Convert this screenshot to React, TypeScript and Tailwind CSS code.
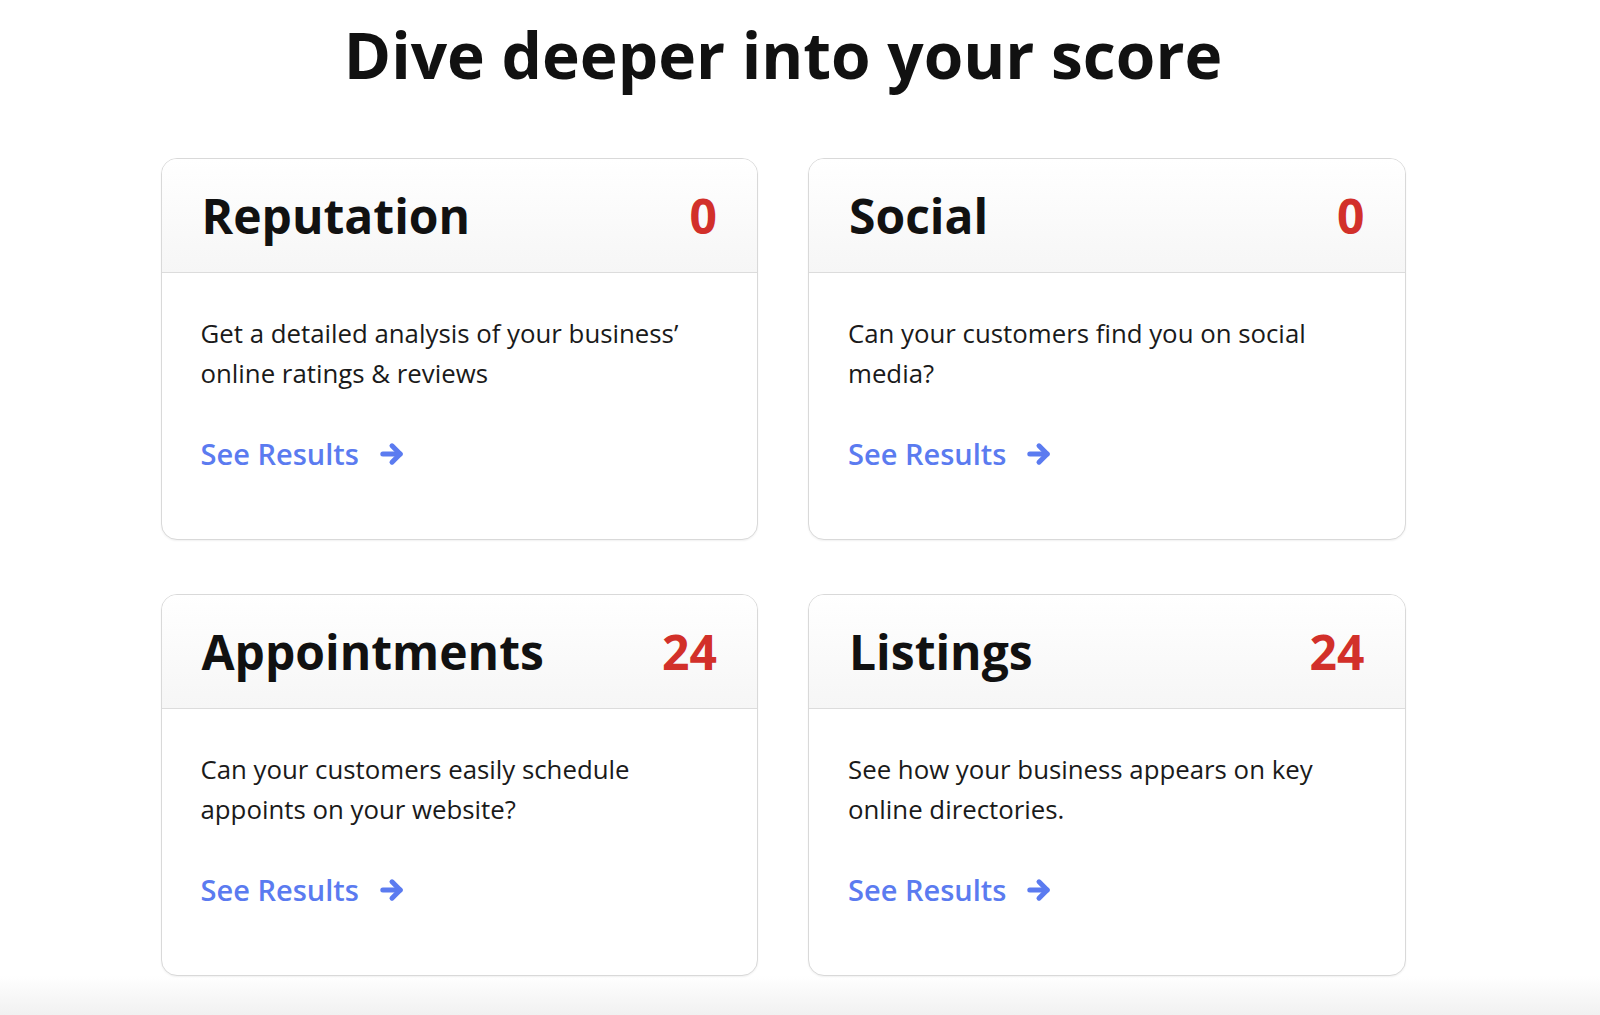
import React from "react";

type Card = { title: string; score: string; desc: string };

const cards: Card[] = [
  { title: "Reputation", score: "0", desc: "Get a detailed analysis of your business\u2019 online ratings & reviews" },
  { title: "Social", score: "0", desc: "Can your customers find you on social media?" },
  { title: "Appointments", score: "24", desc: "Can your customers easily schedule appoints on your website?" },
  { title: "Listings", score: "24", desc: "See how your business appears on key online directories." },
];

function Arrow() {
  return (
    <svg viewBox="0 0 24 24" className="h-[24px] w-[24px]" fill="none" stroke="currentColor" strokeWidth={5} strokeLinecap="round" strokeLinejoin="round">
      <path d="M2.8 12H20.2" />
      <path d="M12 3.8L20.2 12L12 20.2" />
    </svg>
  );
}

function ScoreCard({ c }: { c: Card }) {
  return (
    <div className="flex flex-col overflow-hidden rounded-2xl border border-[#d9d9d9] bg-white shadow-[0_1px_2px_rgba(0,0,0,0.06)]">
      <div className="flex h-[114px] items-center justify-between border-b border-[#dcdcdc] bg-gradient-to-b from-white to-[#f6f6f6] px-10">
        <h2 className="text-[48px] font-bold leading-none text-[#111]">{c.title}</h2>
        <span className="text-[48px] font-bold leading-none text-[#d2302a]">{c.score}</span>
      </div>
      <div className="pb-[71px] pl-[39px] pr-10 pt-10">
        <p className="h-[80px] text-[25.8px] leading-[40px] text-[#1a1a1a]">{c.desc}</p>
        <a href="#" className="mt-[46px] flex items-center gap-[21px] text-[29px] font-semibold leading-none text-[#5b7bf0]">
          <span>See Results</span>
          <Arrow />
        </a>
      </div>
    </div>
  );
}

export default function App() {
  return (
    <div className="min-h-[1015px] bg-white" style={{ fontFamily: '"Open Sans", "Liberation Sans", sans-serif' }}>
      <div className="pr-[34px]">
        <h1 className="pt-[23px] text-center text-[64px] font-bold leading-none text-[#111]">Dive deeper into your score</h1>
        <div className="mx-auto mt-[71px] grid w-[1245px] grid-cols-2 gap-x-[50px] gap-y-[54px]">
          {cards.map((c) => (
            <ScoreCard key={c.title} c={c} />
          ))}
        </div>
      </div>
      <div className="h-[80px] bg-gradient-to-b from-white to-[#e2e2e2]" />
    </div>
  );
}
